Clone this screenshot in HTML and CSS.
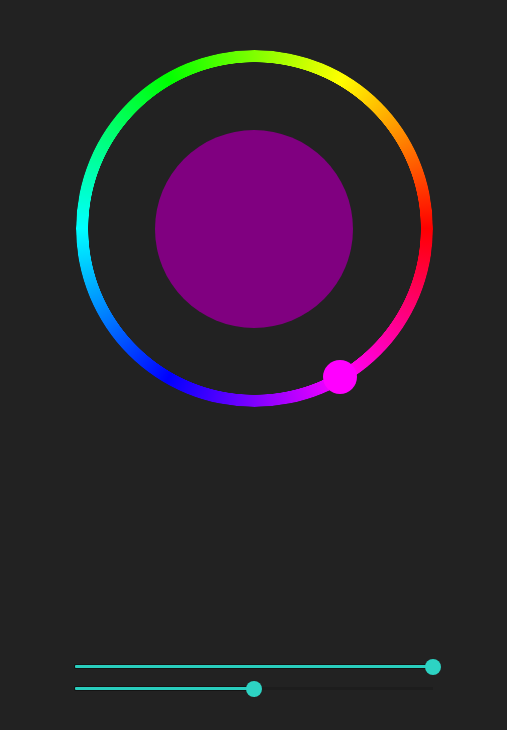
FILE: index.html
```html
<!DOCTYPE html>
<html lang="en">
<head>
    <meta charset="UTF-8">
    <meta name="viewport" content="width=device-width, initial-scale=1.0">
    <title>Colour Picker</title>
    <link rel="stylesheet" href="styles.css">
</head>
<body>
    <div class="picker">
        <div class="wheel">
            <div class="ring"></div>
            <div class="swatch"></div>
            <div class="handle"></div>
        </div>

        <div class="sliders">
            <div class="slider">
                <div class="track"></div>
                <div class="fill" style="width: 100%"></div>
                <div class="thumb" style="left: 100%"></div>
            </div>
            <div class="slider">
                <div class="track"></div>
                <div class="fill" style="width: 50%"></div>
                <div class="thumb" style="left: 50%"></div>
            </div>
        </div>
    </div>
</body>
</html>
```

FILE: styles.css
```css
html, body {
    margin: 0;
    height: 100%;
    background-color: #222222;
}
.picker {
    display: flex;
    flex-direction: column;
    align-items: center;
    padding-top: 50px;
}
.wheel {
    position: relative;
    width: 357px;
    height: 357px;
    margin-left: 1px;
    display: flex;
    align-items: center;
    justify-content: center;
}
/* hue ring: red on the right, running counter-clockwise */
.ring {
    position: absolute;
    inset: 0;
    border-radius: 50%;
    background: conic-gradient(from 90deg, #ff0000, #ff00ff, #0000ff, #00ffff, #00ff00, #ffff00, #ff0000);
    -webkit-mask: radial-gradient(circle, transparent 166px, #000 166.5px);
    mask: radial-gradient(circle, transparent 166px, #000 166.5px);
}
.swatch {
    width: 198px;
    height: 198px;
    border-radius: 50%;
    background-color: #800080;
}
.handle {
    position: absolute;
    left: 247px;
    top: 310px;
    width: 34px;
    height: 34px;
    border-radius: 50%;
    background-color: #ff00ff;
}
.sliders {
    display: flex;
    flex-direction: column;
    width: 358px;
    margin-top: 249px;
    margin-left: 1px;
}
.slider {
    position: relative;
    height: 22px;
}
.track, .fill {
    position: absolute;
    left: 0;
    top: 9px;
    height: 3px;
    border-radius: 1px;
}
.track {
    width: 100%;
    background-color: #1d1d1d;
}
.fill {
    background-color: #29cdbd;
    box-shadow: 0 0 0 1px #141414;
}
.thumb {
    position: absolute;
    top: 11px;
    width: 16px;
    height: 16px;
    margin-left: -8px;
    margin-top: -8px;
    border-radius: 50%;
    background-color: #2dd3c3;
}
```
